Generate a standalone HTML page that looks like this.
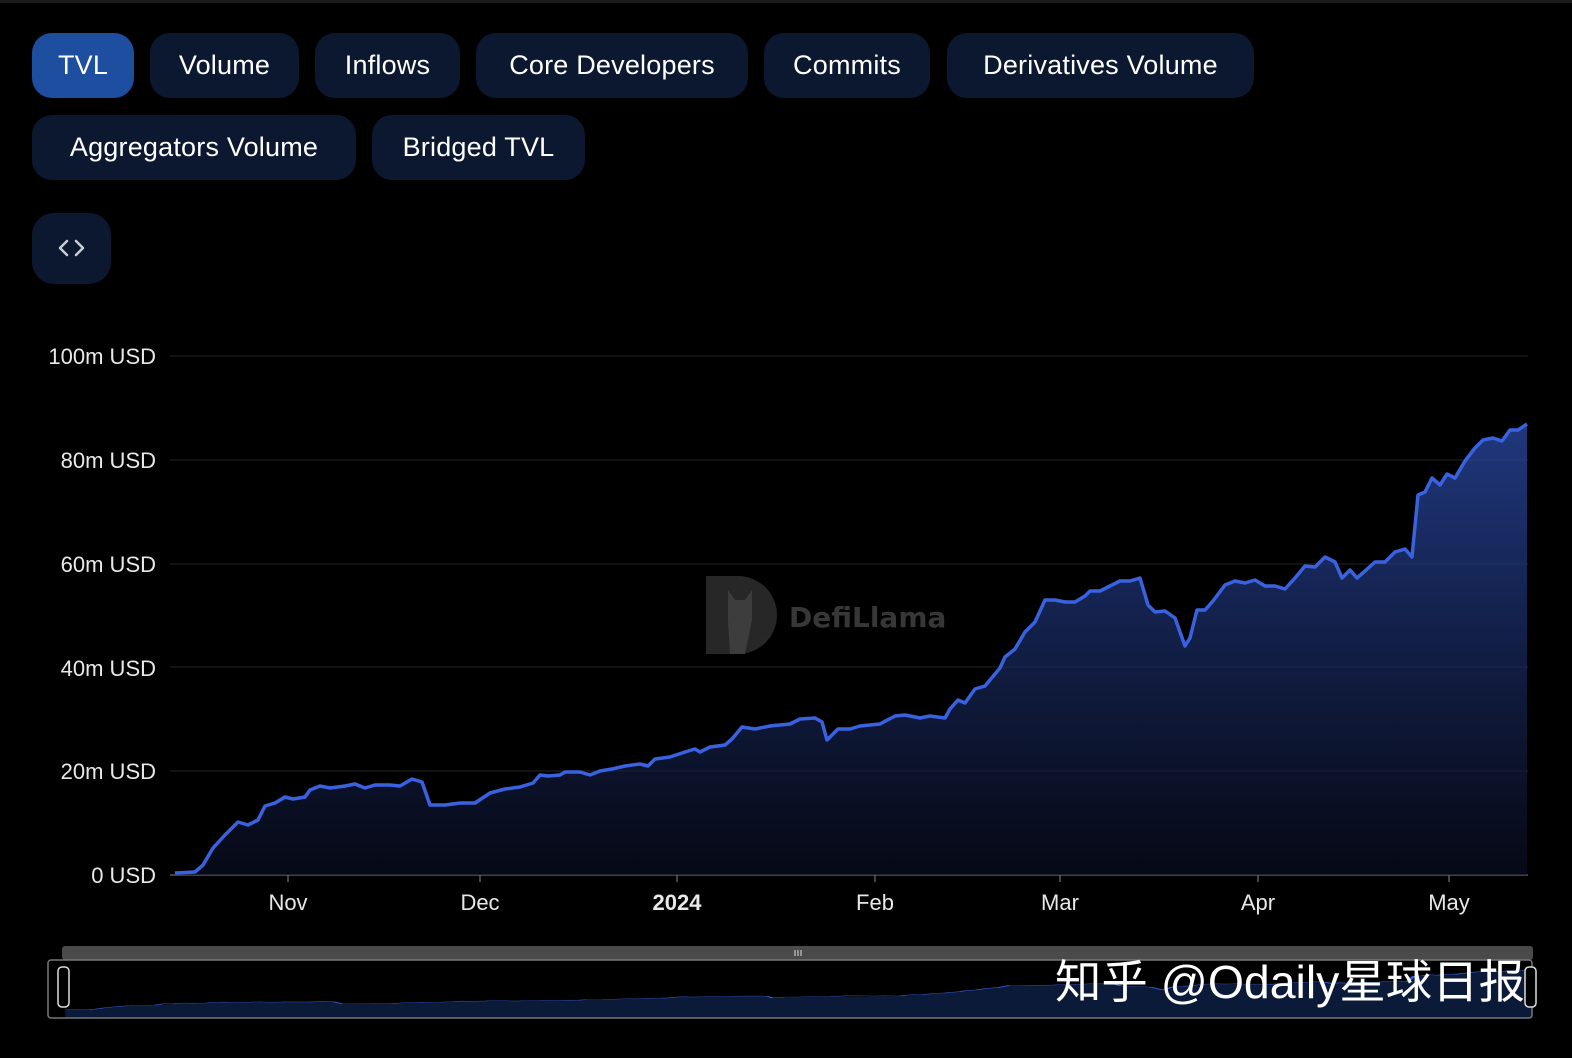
<!DOCTYPE html>
<html><head><meta charset="utf-8"><style>
html,body{margin:0;padding:0;background:#000;width:1572px;height:1058px;overflow:hidden;font-family:"Liberation Sans",sans-serif}
.btn{position:absolute;height:65px;border-radius:20px;background:#0b1830;color:#fff;font-size:27px;line-height:65px;text-align:center;letter-spacing:0.2px}
.on{background:#1d4ea0}
.yl{position:absolute;right:1416px;color:#e8e8e8;font-size:22px}
.xl{position:absolute;top:890px;color:#e8e8e8;font-size:22px;transform:translateX(-50%)}
</style></head><body>
<div style="position:absolute;left:0;top:0;width:1572px;height:3px;background:#1a1a1a"></div>
<div class="btn on" style="left:32px;top:33px;width:102px">TVL</div>
<div class="btn" style="left:150px;top:33px;width:149px">Volume</div>
<div class="btn" style="left:315px;top:33px;width:145px">Inflows</div>
<div class="btn" style="left:476px;top:33px;width:272px">Core Developers</div>
<div class="btn" style="left:764px;top:33px;width:166px">Commits</div>
<div class="btn" style="left:947px;top:33px;width:307px">Derivatives Volume</div>
<div class="btn" style="left:32px;top:115px;width:324px">Aggregators Volume</div>
<div class="btn" style="left:372px;top:115px;width:213px">Bridged TVL</div>
<div class="btn" style="left:32px;top:213px;width:79px;height:71px;border-radius:22px"><svg width="79" height="71" viewBox="0 0 79 71"><path d="M46 27 L39 34 L46 41 M55 27 L62 34 L55 41" transform="translate(-11,1)" stroke="#c8ccd4" stroke-width="2.5" fill="none" stroke-linecap="round" stroke-linejoin="round"/></svg></div>
<div class="yl" style="top:344px">100m USD</div>
<div class="yl" style="top:448px">80m USD</div>
<div class="yl" style="top:552px">60m USD</div>
<div class="yl" style="top:656px">40m USD</div>
<div class="yl" style="top:759px">20m USD</div>
<div class="yl" style="top:863px">0 USD</div>
<div class="xl" style="left:288px">Nov</div>
<div class="xl" style="left:480px">Dec</div>
<div class="xl" style="left:677px;font-weight:bold">2024</div>
<div class="xl" style="left:875px">Feb</div>
<div class="xl" style="left:1060px">Mar</div>
<div class="xl" style="left:1258px">Apr</div>
<div class="xl" style="left:1449px">May</div>
<svg style="position:absolute;left:0;top:0" width="1572" height="1058">
<defs><linearGradient id="g" x1="0" y1="0" x2="0" y2="1"><stop offset="0" stop-color="#2a4aa8" stop-opacity="0.75"/><stop offset="1" stop-color="#0a0f24" stop-opacity="0.6"/></linearGradient></defs>
<g stroke="#1c1c1c" stroke-width="1.3"><line x1="170" y1="356" x2="1528" y2="356"/><line x1="170" y1="460" x2="1528" y2="460"/><line x1="170" y1="564" x2="1528" y2="564"/><line x1="170" y1="667" x2="1528" y2="667"/><line x1="170" y1="771" x2="1528" y2="771"/></g>
<line x1="170" y1="875" x2="1528" y2="875" stroke="#6a6a6a" stroke-width="1.3"/>
<g stroke="#6a6a6a" stroke-width="1.3"><line x1="288" y1="875" x2="288" y2="882"/><line x1="480" y1="875" x2="480" y2="882"/><line x1="677" y1="875" x2="677" y2="882"/><line x1="875" y1="875" x2="875" y2="882"/><line x1="1060" y1="875" x2="1060" y2="882"/><line x1="1258" y1="875" x2="1258" y2="882"/><line x1="1449" y1="875" x2="1449" y2="882"/></g>
<g id="wm" opacity="0.9"><path d="M706 576 H738 A38 38 0 0 1 738 654 H706 Z" fill="#2c2c2c"/><path d="M728 590 L735 600 H745 L752 590 L752 620 L745 654 H730 L728 620 Z" fill="#444"/><text x="789" y="627" fill="#3e3e3e" font-size="28" font-weight="bold" font-family="DejaVu Sans">DefiLlama</text></g>
<polygon fill="url(#g)" points="175,875 175,873 195,872 203,865 213,848 225,835 238,822 248,825 258,820 265,806 275,803 285,797 293,799 305,797 310,790 320,786 330,788 345,786 355,784 365,788 375,785 390,785 400,786 412,779 422,782 430,805 445,805 460,803 475,803 490,793 505,789 520,787 533,783 540,775 548,776 560,775 565,772 580,772 590,775 600,771 612,769 625,766 640,764 648,766 655,759 670,757 685,752 695,749 700,752 710,747 725,745 732,739 742,727 755,729 770,726 790,724 800,719 815,718 822,722 827,740 838,729 850,729 860,726 880,724 895,716 905,715 920,718 930,716 945,718 950,709 958,700 965,703 975,689 985,686 995,674 1000,668 1005,657 1015,649 1025,632 1035,622 1045,600 1055,600 1065,602 1075,602 1085,596 1090,591 1100,591 1110,586 1120,581 1130,581 1140,578 1148,605 1155,612 1165,611 1175,618 1185,646 1190,638 1197,610 1205,610 1213,601 1225,585 1235,581 1245,583 1255,580 1265,586 1275,586 1285,589 1295,578 1305,566 1315,567 1325,557 1335,562 1342,578 1350,570 1357,578 1365,571 1375,562 1385,562 1395,552 1405,549 1412,557 1418,495 1425,492 1432,478 1440,485 1447,474 1455,478 1465,461 1475,448 1483,440 1493,438 1502,441 1510,430 1518,430 1527,424 1527,875"/>
<polyline id="ln" fill="none" stroke="#3a62e0" stroke-width="3.5" stroke-linejoin="round" points="175,873 195,872 203,865 213,848 225,835 238,822 248,825 258,820 265,806 275,803 285,797 293,799 305,797 310,790 320,786 330,788 345,786 355,784 365,788 375,785 390,785 400,786 412,779 422,782 430,805 445,805 460,803 475,803 490,793 505,789 520,787 533,783 540,775 548,776 560,775 565,772 580,772 590,775 600,771 612,769 625,766 640,764 648,766 655,759 670,757 685,752 695,749 700,752 710,747 725,745 732,739 742,727 755,729 770,726 790,724 800,719 815,718 822,722 827,740 838,729 850,729 860,726 880,724 895,716 905,715 920,718 930,716 945,718 950,709 958,700 965,703 975,689 985,686 995,674 1000,668 1005,657 1015,649 1025,632 1035,622 1045,600 1055,600 1065,602 1075,602 1085,596 1090,591 1100,591 1110,586 1120,581 1130,581 1140,578 1148,605 1155,612 1165,611 1175,618 1185,646 1190,638 1197,610 1205,610 1213,601 1225,585 1235,581 1245,583 1255,580 1265,586 1275,586 1285,589 1295,578 1305,566 1315,567 1325,557 1335,562 1342,578 1350,570 1357,578 1365,571 1375,562 1385,562 1395,552 1405,549 1412,557 1418,495 1425,492 1432,478 1440,485 1447,474 1455,478 1465,461 1475,448 1483,440 1493,438 1502,441 1510,430 1518,430 1527,424"/>
<rect x="62" y="946" width="1471" height="14" rx="3" fill="#4a4a4a"/>
<g stroke="#ddd" stroke-width="1"><line x1="795" y1="950" x2="795" y2="956"/><line x1="798" y1="950" x2="798" y2="956"/><line x1="801" y1="950" x2="801" y2="956"/></g>
<g transform="translate(-124.6,932.1) scale(1.085,0.089)"><polygon fill="#0b1a38" points="175,965 175,873 195,872 225,835 258,820 285,797 330,788 412,779 422,782 430,805 475,803 540,775 600,771 685,752 742,727 815,718 822,722 827,740 860,726 945,718 975,689 1005,657 1045,600 1140,578 1148,605 1175,618 1185,646 1197,610 1225,585 1295,578 1325,557 1412,557 1418,495 1483,440 1527,424 1527,965"/><use href="#ln" stroke="#3d5e9e" style="stroke-width:1px" vector-effect="non-scaling-stroke"/></g>
<rect x="48" y="960" width="1484" height="58" fill="none" stroke="#777" stroke-width="1.5" rx="3"/>
<rect x="58" y="967" width="11" height="40" rx="4" fill="#000" stroke="#ddd" stroke-width="1.5"/>
<rect x="1525" y="967" width="11" height="40" rx="4" fill="#000" stroke="#ddd" stroke-width="1.5"/>
<text x="1055" y="998" fill="#fff" font-size="46" textLength="470" lengthAdjust="spacingAndGlyphs" font-family="Liberation Sans, Noto Sans CJK SC, sans-serif">知乎 @Odaily星球日报</text>
</svg>
</body></html>
